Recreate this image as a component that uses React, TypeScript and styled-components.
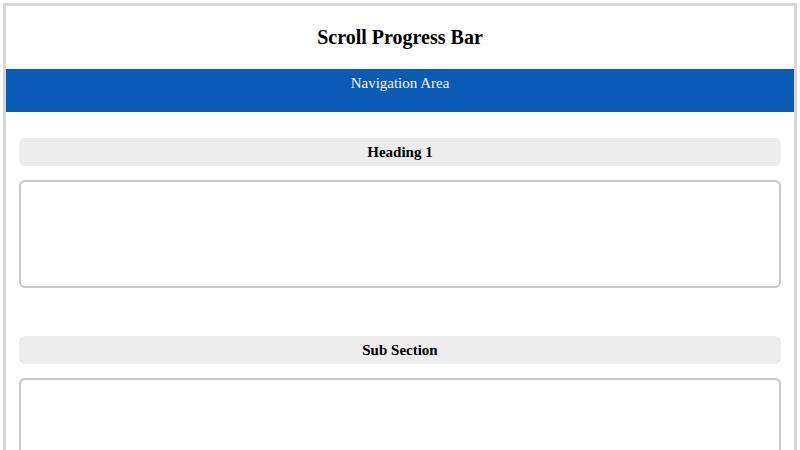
import styled, { createGlobalStyle } from "styled-components";

const GlobalStyle = createGlobalStyle`
  html, body {
    margin: 0;
    background: #ffffff;
    overflow: hidden;
  }
  body {
    font-family: "Liberation Serif", "Times New Roman", serif;
  }
`;

const sections = ["Heading 1", "Sub Section"];

export default function App() {
  return (
    <>
      <GlobalStyle />
      <Frame>
        <Header>
          <Title>Scroll Progress Bar</Title>
        </Header>
        <Nav>Navigation Area</Nav>
        <Content>
          {sections.map((name) => (
            <Section key={name}>
              <SectionTitle>{name}</SectionTitle>
              <SectionBody />
            </Section>
          ))}
        </Content>
      </Frame>
    </>
  );
}

const Frame = styled.div`
  margin: 3px;
  border: 3px solid #d6d6d6;
  min-height: 900px;
  background: #ffffff;
`;

const Header = styled.header`
  height: 63px;
  display: flex;
  align-items: center;
  justify-content: center;
`;

const Title = styled.h1`
  margin: 0;
  font-size: 20px;
  font-weight: bold;
  color: #000000;
`;

const Nav = styled.nav`
  height: 43px;
  box-sizing: border-box;
  padding-top: 6px;
  background: #0a5bb4;
  color: #f2f6fc;
  font-size: 15px;
  text-align: center;
`;

const Content = styled.main`
  padding: 26px 13px 0;
  display: flex;
  flex-direction: column;
  gap: 48px;
`;

const Section = styled.section`
  display: flex;
  flex-direction: column;
  gap: 14px;
`;

const SectionTitle = styled.h2`
  margin: 0;
  height: 28px;
  display: flex;
  align-items: center;
  justify-content: center;
  background: #ececec;
  border-radius: 6px;
  font-size: 15px;
  font-weight: bold;
  color: #000000;
`;

const SectionBody = styled.div`
  height: 108px;
  box-sizing: border-box;
  border: 2px solid #c6c6c6;
  border-radius: 6px;
`;
